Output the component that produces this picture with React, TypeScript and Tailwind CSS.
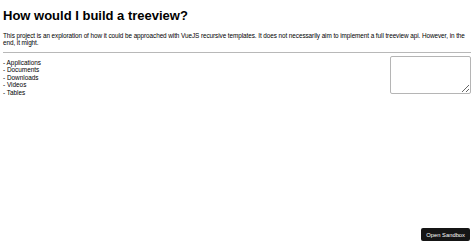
import React from 'react';

const folders = ['Applications', 'Documents', 'Downloads', 'Videos', 'Tables'];

const App: React.FC = () => {
  return (
    <div
      className="relative h-[248px] w-[474px] overflow-hidden bg-white px-[3px] text-black"
      style={{ fontFamily: '"Liberation Sans", Arial, sans-serif' }}
    >
      <h1 className="pt-[8px] text-[13px] font-bold leading-[15px]">How would I build a treeview?</h1>
      <p className="mt-[9px] text-[6.4px] leading-[7.4px] tracking-[-0.08px]">
        This project is an exploration of how it could be approached with VueJS recursive templates. It does not
        necessarily aim to implement a full treeview api. However, in the end, it might.
      </p>
      <hr className="mt-[5px] border-t border-[#b8b8b8]" />
      <div className="mt-[3px] flex items-start justify-between">
        <ul className="mt-[3px] text-[6.4px] leading-[7.5px]">
          {folders.map((f) => (
            <li key={f}>- {f}</li>
          ))}
        </ul>
        <textarea className="h-[38px] w-[81px] resize rounded-[2px] border border-[#b5b5b5] bg-white" />
      </div>
      {/* sandbox button pinned bottom-right */}
      <button className="absolute bottom-[7px] right-[4px] rounded-[2px] bg-[#151515] px-[5px] py-[3.5px] text-[5.8px] leading-[6px] text-white">
        Open Sandbox
      </button>
    </div>
  );
};

export default App;
